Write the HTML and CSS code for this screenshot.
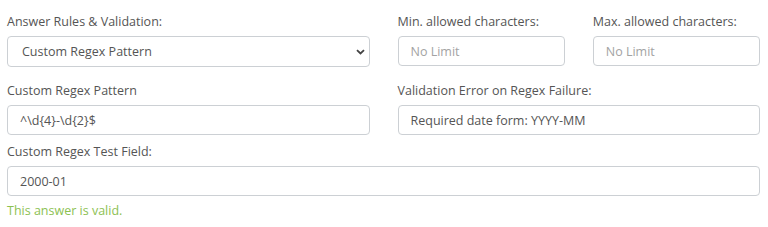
FILE: index.html
```html
<!DOCTYPE html>
<html lang="en">
<head>
    <meta charset="UTF-8">
    <meta name="viewport" content="width=device-width, initial-scale=1.0">
    <title>Answer Rules</title>
    <link rel="stylesheet" href="styles.css">
</head>
<body>

    <div class="rules-form">
        <div class="form-row">
            <div class="form-group">
                <label for="rule">Answer Rules &amp; Validation:</label>
                <div class="select-wrap">
                    <select id="rule" name="rule">
                        <option>Custom Regex Pattern</option>
                    </select>
                    <svg class="chevron" width="9" height="6" viewBox="0 0 9 6">
                        <path d="M1 1.2 L4.5 4.5 L8 1.2" fill="none" stroke="#444" stroke-width="1.8"/>
                    </svg>
                </div>
            </div>
            <div class="form-row">
                <div class="form-group">
                    <label for="min">Min. allowed characters:</label>
                    <input type="text" id="min" name="min" placeholder="No Limit">
                </div>
                <div class="form-group">
                    <label for="max">Max. allowed characters:</label>
                    <input type="text" id="max" name="max" placeholder="No Limit">
                </div>
            </div>
        </div>

        <div class="form-row">
            <div class="form-group">
                <label for="pattern">Custom Regex Pattern</label>
                <input type="text" id="pattern" name="pattern" value="^\d{4}-\d{2}$">
            </div>
            <div class="form-group">
                <label for="error">Validation Error on Regex Failure:</label>
                <input type="text" id="error" name="error" value="Required date form: YYYY-MM">
            </div>
        </div>

        <div class="form-group test-group">
            <label for="test">Custom Regex Test Field:</label>
            <input type="text" id="test" name="test" value="2000-01">
            <p class="valid-msg">This answer is valid.</p>
        </div>
    </div>

</body>
</html>
```

FILE: styles.css
```css
body {
    font-family: "Open Sans", Arial, sans-serif;
    font-size: 12.5px;
    background-color: #fff;
    margin: 0;
    padding: 0;
}

.rules-form {
    width: 753px;
    padding: 13px 0 0 7px;
}

.form-row {
    display: grid;
    grid-template-columns: 1fr 1fr;
    column-gap: 28px;
}

.form-group {
    margin-bottom: 15px;
}

.form-row .form-row .form-group {
    margin-bottom: 0;
}

.test-group {
    margin-top: -7px;
}

label {
    display: block;
    height: 17px;
    line-height: 17px;
    margin-bottom: 6px;
    color: #555;
}

input[type="text"],
select {
    display: block;
    width: 100%;
    height: 30px;
    padding: 0 12px;
    border: 1px solid #ccd0d4;
    border-radius: 4px;
    box-sizing: border-box;
    font-family: inherit;
    font-size: 12.5px;
    color: #555;
    background-color: #fff;
    outline: none;
}

input::placeholder {
    color: #a3a3a3;
}

.select-wrap {
    position: relative;
}

select {
    height: 31px;
    padding-left: 14px;
    -webkit-appearance: none;
    appearance: none;
}

.chevron {
    position: absolute;
    right: 5px;
    top: 13px;
    pointer-events: none;
}

.valid-msg {
    margin: 6px 0 0;
    line-height: 17px;
    color: #8cc152;
}
```
